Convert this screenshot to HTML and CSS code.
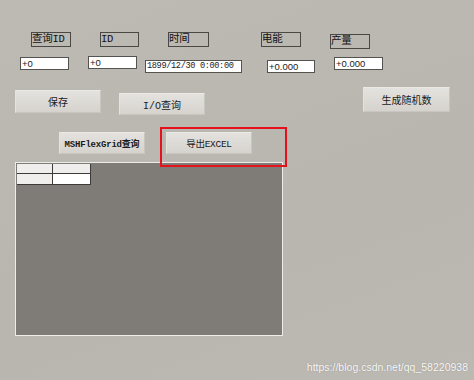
FILE: index.html
```html
<!DOCTYPE html>
<html lang="zh-CN">
<head>
  <meta charset="UTF-8">
  <meta name="viewport" content="width=device-width, initial-scale=1.0">
  <title>Form1</title>
  <link rel="stylesheet" href="styles.css">
</head>
<body>
  <div class="form">
    <div class="row labels">
      <div class="lbl l-qid">查询ID</div>
      <div class="lbl l-id">ID</div>
      <div class="lbl l-time">时间</div>
      <div class="lbl l-power">电能</div>
      <div class="lbl l-output">产量</div>
    </div>
    <div class="row inputs">
      <div class="txt t-qid">+0</div>
      <div class="txt t-id">+0</div>
      <div class="txt t-time">1899/12/30 0:00:00</div>
      <div class="txt t-power">+0.000</div>
      <div class="txt t-output">+0.000</div>
    </div>
    <div class="row buttons">
      <div class="btn b-save">保存</div>
      <div class="btn b-io">I/O查询</div>
      <div class="btn b-rand">生成随机数</div>
    </div>
    <div class="row buttons2">
      <div class="btn b-grid">MSHFlexGrid查询</div>
      <div class="btn b-excel">导出EXCEL<span class="mark"></span></div>
    </div>
    <div class="grid">
      <div class="cells">
        <div class="cell fixed"></div>
        <div class="cell fixed"></div>
        <div class="cell fixed"></div>
        <div class="cell"></div>
      </div>
    </div>
  </div>
  <div class="watermark">https://blog.csdn.net/qq_58220938</div>
</body>
</html>
```

FILE: styles.css
```css
*{margin:0;padding:0;box-sizing:border-box;}
html, body{width:100%;height:100%;}
body{position:relative;overflow:hidden;background:linear-gradient(160deg,#bdb9b3 0%,#b9b5af 60%,#bcb8b2 100%);font-family:"Liberation Mono","Noto Sans CJK SC",monospace;color:#111;}
.form{padding-top:32px;}
.row{display:flex;align-items:flex-start;}

/* labels */
.labels{height:24px;}
.lbl{width:40px;height:15px;border:1px solid #4a4845;font-size:10.5px;line-height:12px;letter-spacing:-0.3px;white-space:nowrap;}
.l-qid{margin-left:31px;}
.l-id{margin-left:29px;width:39px;}
.l-time{margin-left:29px;width:41px;}
.l-power{margin-left:52px;}
.l-output{margin-left:29px;margin-top:2px;}

/* text boxes */
.inputs{height:31px;}
.txt{height:13px;background:#fff;border:1px solid #55534f;padding-left:1px;font-family:"Liberation Sans","Noto Sans CJK SC",sans-serif;font-size:9.5px;line-height:11px;color:#222;white-space:nowrap;}
.t-qid{margin-left:20px;width:49px;margin-top:1px;}
.t-id{margin-left:19px;width:49px;}
.t-time{margin-left:8px;width:97px;margin-top:4px;font-family:"Liberation Mono",monospace;font-size:8.6px;letter-spacing:-0.35px;}
.t-power{margin-left:25px;width:48px;margin-top:4px;}
.t-output{margin-left:19px;width:49px;margin-top:1px;}

/* buttons */
.btn{height:22px;width:86px;display:flex;align-items:center;justify-content:center;background:linear-gradient(#e4e2de,#d6d3ce);border:1px solid #c9c5bf;border-top-color:#ece9e5;border-left-color:#e6e3df;font-size:10px;color:#1a1a1a;white-space:nowrap;}
.buttons{height:45px;}
.b-save{margin-left:15px;margin-top:3px;height:23px;}
.b-io{margin-left:18px;margin-top:6px;}
.b-rand{margin-left:158px;width:87px;height:25px;font-family:"Noto Sans CJK SC",sans-serif;}
.buttons2{height:30px;}
.b-grid{margin-left:59px;font-size:9px;font-weight:bold;letter-spacing:-0.2px;}
.b-excel{position:relative;margin-left:21px;font-size:9.5px;letter-spacing:-0.3px;}
.mark{position:absolute;left:-7px;top:-6px;width:127px;height:40px;border:2px solid #e3121c;}

/* grid */
.grid{margin-left:15px;width:268px;height:174px;background:#7f7c77;border:1px solid #eeece8;padding:1px 0 0 1px;}
.cells{display:grid;grid-template-columns:36px 37px;grid-template-rows:10px 10px;width:74px;border-right:1px solid #3c3b39;border-bottom:1px solid #3c3b39;}
.cell{background:#fff;border-right:1px solid #3c3b39;border-bottom:1px solid #3c3b39;}
.cell:nth-child(2n){border-right:0;}
.cell:nth-child(n+3){border-bottom:0;}
.cell.fixed{background:#efeeec;}

.watermark{position:absolute;right:6px;bottom:7px;font-family:"Liberation Sans",sans-serif;font-size:10.5px;color:#fafafa;text-shadow:0 0 1px #85827d;}
```
